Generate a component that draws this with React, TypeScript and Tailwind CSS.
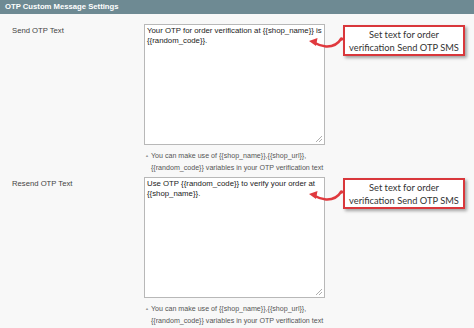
import React from "react";

function Arrow() {
  return (
    <svg
      className="absolute left-[-39px] top-[7px]"
      width="41"
      height="18"
      viewBox="0 0 41 18"
    >
      <path
        d="M35 5 Q30 13 20 12.5 Q14 12 9 9"
        fill="none"
        stroke="#e0393e"
        strokeWidth="2.4"
        strokeLinecap="round"
      />
      <circle cx="35.5" cy="5" r="1.8" fill="#e0393e" />
      <polygon points="3,7 11.5,4 10,12" fill="#e0393e" />
    </svg>
  );
}

function Grip() {
  return (
    <svg className="absolute right-[1px] bottom-[1px]" width="8" height="8" viewBox="0 0 8 8">
      <line x1="7" y1="1" x2="1" y2="7" stroke="#9a9a9a" strokeWidth="0.8" />
      <line x1="7" y1="4" x2="4" y2="7" stroke="#9a9a9a" strokeWidth="0.8" />
    </svg>
  );
}

function Row({
  label,
  lines,
}: {
  label: string;
  lines: string[];
}) {
  return (
    <div className="flex items-start">
      <div className="w-[144px] pl-[12px] pt-[2px] text-[7.7px] leading-[10px] text-[#444]">
        {label}
      </div>
      <div className="w-[181px] flex flex-col">
        <div className="relative h-[121px] bg-white border border-[#b8b8b8] pl-[2px] pt-[1px] text-[7.8px] leading-[10px] text-[#222] whitespace-nowrap overflow-hidden">
          {lines.map((l, i) => (
            <div key={i}>{l}</div>
          ))}
          <Grip />
        </div>
        <div className="mt-[5px] text-[7.1px] leading-[12px] text-[#555] whitespace-nowrap">
          <div className="flex items-center">
            <span className="text-[4px] text-[#999] w-[7px] pl-[1px]">▲</span>
            <span>You can make use of {"{{shop_name}}"},{"{{shop_url}}"},</span>
          </div>
          <div className="pl-[7px]">
            {"{{random_code}}"} variables in your OTP verification text
          </div>
        </div>
      </div>
      <div className="relative ml-[18px] mt-[1px] w-[122px] h-[31px] bg-white border-2 border-[#d9373b] shadow-[2px_2px_3px_rgba(0,0,0,0.35)] flex flex-col items-center justify-center text-[9.3px] leading-[13px] text-[#333] font-['Lato',sans-serif]">
        <div>Set text for order</div>
        <div>verification Send OTP SMS</div>
        <Arrow />
      </div>
    </div>
  );
}

export default function App() {
  return (
    <div className="w-[474px] h-[328px] overflow-hidden bg-[#f8f8f8] font-['Liberation_Sans',Arial,sans-serif]">
      <div className="h-[14px] bg-[#6e8a93] pl-[5px] flex items-center text-white font-bold text-[7.7px]">
        OTP Custom Message Settings
      </div>
      <div className="pt-[10px] flex flex-col gap-[3px]">
        <Row
          label="Send OTP Text"
          lines={[
            "Your OTP for order verification at {{shop_name}} is",
            "{{random_code}}.",
          ]}
        />
        <Row
          label="Resend OTP Text"
          lines={[
            "Use OTP {{random_code}} to verify your order at",
            "{{shop_name}}.",
          ]}
        />
      </div>
    </div>
  );
}
